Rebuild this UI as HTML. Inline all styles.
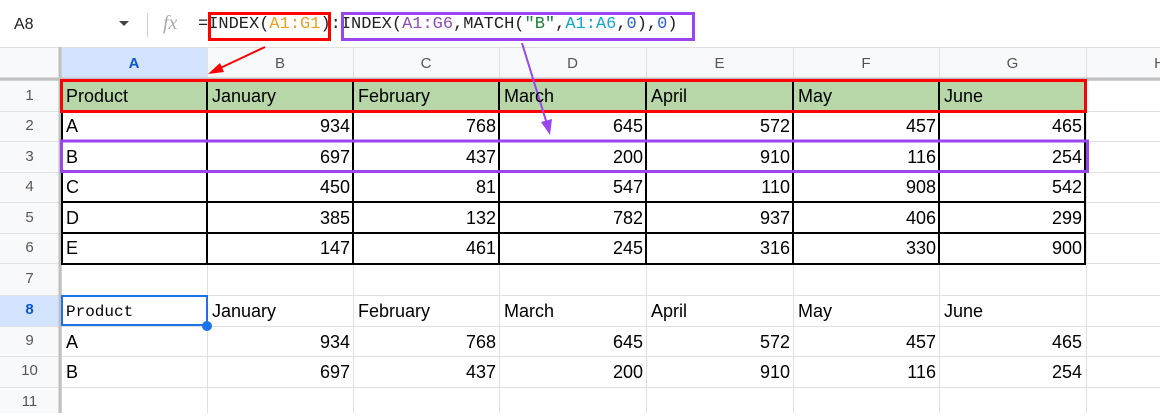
<!DOCTYPE html><html><head><meta charset="utf-8"><style>
body{margin:0;width:1160px;height:413px;overflow:hidden;background:#fff;font-family:"Liberation Sans",Arial,sans-serif;position:relative}
.c{position:absolute;font-size:18px;color:#000;white-space:nowrap;line-height:30px;height:30px}
.r{text-align:right}
.h{position:absolute;font-size:15px;color:#555;text-align:center;line-height:30px}
.m{font-family:"Liberation Mono",monospace}
</style></head><body>
<div style="position:absolute;left:0;top:0;width:1160px;height:47px;background:#fff"></div>
<div style="position:absolute;left:14px;top:10px;font-size:16px;line-height:30px;color:#222">A8</div>
<div style="position:absolute;left:119px;top:21px;width:0;height:0;border-left:5px solid transparent;border-right:5px solid transparent;border-top:5px solid #444"></div>
<div style="position:absolute;left:147px;top:13px;width:1px;height:24px;background:#ccc"></div>
<div style="position:absolute;left:163px;top:8px;font-family:'Liberation Serif',serif;font-style:italic;font-size:20px;line-height:30px;color:#aaa">fx</div>
<div class="m" style="position:absolute;left:198px;top:10px;font-size:17px;line-height:30px;color:#222;white-space:pre">=INDEX(<span style="color:#f0a020">A1:G1</span>):INDEX(<span style="color:#8a4fb0">A1:G6</span>,MATCH(<span style="color:#188038">"B"</span>,<span style="color:#12a5d0">A1:A6</span>,<span style="color:#3060d0">0</span>),<span style="color:#3060d0">0</span>)</div>
<svg style="position:absolute;left:0;top:0" width="1160" height="413">
<rect x="0" y="47" width="1160" height="33" fill="#f8f9fa"/>
<rect x="0" y="47" width="61" height="366" fill="#f8f9fa"/>
<rect x="61" y="47" width="146" height="33" fill="#d3e3fd"/>
<rect x="0" y="295" width="61" height="31" fill="#d3e3fd"/>
<rect x="61" y="80" width="1025" height="31" fill="#b7d7a8"/>
<g stroke="#e0e0e0" stroke-width="1">
<line x1="0" y1="47.5" x2="1160" y2="47.5"/>
<line x1="0" y1="80.5" x2="1160" y2="80.5"/><line x1="0" y1="111.5" x2="1160" y2="111.5"/><line x1="0" y1="141.5" x2="1160" y2="141.5"/><line x1="0" y1="172.5" x2="1160" y2="172.5"/><line x1="0" y1="202.5" x2="1160" y2="202.5"/><line x1="0" y1="233.5" x2="1160" y2="233.5"/><line x1="0" y1="263.5" x2="1160" y2="263.5"/><line x1="0" y1="295.5" x2="1160" y2="295.5"/><line x1="0" y1="326.5" x2="1160" y2="326.5"/><line x1="0" y1="356.5" x2="1160" y2="356.5"/><line x1="0" y1="387.5" x2="1160" y2="387.5"/>
<line x1="61.5" y1="47" x2="61.5" y2="413"/><line x1="207.5" y1="47" x2="207.5" y2="413"/><line x1="353.5" y1="47" x2="353.5" y2="413"/><line x1="499.5" y1="47" x2="499.5" y2="413"/><line x1="646.5" y1="47" x2="646.5" y2="413"/><line x1="793.5" y1="47" x2="793.5" y2="413"/><line x1="939.5" y1="47" x2="939.5" y2="413"/><line x1="1086.5" y1="47" x2="1086.5" y2="413"/>
</g>
<line x1="0" y1="79" x2="1160" y2="79" stroke="#c0c0c0" stroke-width="3"/>
<line x1="60" y1="47" x2="60" y2="413" stroke="#c0c0c0" stroke-width="3"/>
<g stroke="#000" stroke-width="2">
<line x1="61" y1="111" x2="1086" y2="111"/><line x1="61" y1="141" x2="1086" y2="141"/><line x1="61" y1="172" x2="1086" y2="172"/><line x1="61" y1="202" x2="1086" y2="202"/><line x1="61" y1="233" x2="1086" y2="233"/><line x1="61" y1="264" x2="1086" y2="264"/>
<line x1="62" y1="80" x2="62" y2="264"/><line x1="207" y1="80" x2="207" y2="264"/><line x1="353" y1="80" x2="353" y2="264"/><line x1="499" y1="80" x2="499" y2="264"/><line x1="646" y1="80" x2="646" y2="264"/><line x1="793" y1="80" x2="793" y2="264"/><line x1="939" y1="80" x2="939" y2="264"/><line x1="1085" y1="80" x2="1085" y2="264"/>
</g>
<rect x="61.5" y="80.5" width="1024" height="31" fill="none" stroke="#f00" stroke-width="3"/>
<rect x="61.5" y="141" width="1026" height="30.5" fill="none" stroke="#9a45f0" stroke-width="3"/>
<rect x="209.5" y="13.5" width="120" height="26" fill="none" stroke="#f00" stroke-width="3"/>
<rect x="342.5" y="13.5" width="351" height="26" fill="none" stroke="#9a45f0" stroke-width="3"/>
<line x1="265" y1="47" x2="216" y2="70" stroke="#f00" stroke-width="2"/>
<polygon points="208,74 220,63 224,72" fill="#f00"/>
<line x1="522" y1="43" x2="547" y2="124" stroke="#9a45f0" stroke-width="2"/>
<polygon points="550,135 541,122 552,119" fill="#9a45f0"/>
<rect x="62" y="296" width="145" height="29" fill="none" stroke="#1a73e8" stroke-width="2"/>
<circle cx="207" cy="326" r="5" fill="#1a73e8"/>
</svg>
<div class="h" style="left:61px;top:47px;width:146px;color:#0b57d0;font-weight:bold;line-height:33px">A</div>
<div class="h" style="left:207px;top:47px;width:146px;line-height:33px">B</div>
<div class="h" style="left:353px;top:47px;width:146px;line-height:33px">C</div>
<div class="h" style="left:499px;top:47px;width:147px;line-height:33px">D</div>
<div class="h" style="left:646px;top:47px;width:147px;line-height:33px">E</div>
<div class="h" style="left:793px;top:47px;width:146px;line-height:33px">F</div>
<div class="h" style="left:939px;top:47px;width:147px;line-height:33px">G</div>
<div class="h" style="left:1086px;top:47px;width:147px;line-height:33px">H</div>
<div class="h" style="left:0;top:81px;width:59px">1</div>
<div class="h" style="left:0;top:111px;width:59px">2</div>
<div class="h" style="left:0;top:142px;width:59px">3</div>
<div class="h" style="left:0;top:172px;width:59px">4</div>
<div class="h" style="left:0;top:203px;width:59px">5</div>
<div class="h" style="left:0;top:233px;width:59px">6</div>
<div class="h" style="left:0;top:264px;width:59px">7</div>
<div class="h" style="left:0;top:295px;width:59px;color:#0b57d0;font-weight:bold">8</div>
<div class="h" style="left:0;top:326px;width:59px">9</div>
<div class="h" style="left:0;top:356px;width:59px">10</div>
<div class="h" style="left:0;top:387px;width:59px">11</div>

<div class="c" style="left:66px;top:81px">Product</div><div class="c" style="left:212px;top:81px">January</div><div class="c" style="left:358px;top:81px">February</div><div class="c" style="left:504px;top:81px">March</div><div class="c" style="left:651px;top:81px">April</div><div class="c" style="left:798px;top:81px">May</div><div class="c" style="left:944px;top:81px">June</div>

<div class="c" style="left:66px;top:111px">A</div><div class="c r" style="left:207px;width:143px;top:111px">934</div><div class="c r" style="left:353px;width:143px;top:111px">768</div><div class="c r" style="left:499px;width:144px;top:111px">645</div><div class="c r" style="left:646px;width:144px;top:111px">572</div><div class="c r" style="left:793px;width:143px;top:111px">457</div><div class="c r" style="left:939px;width:143px;top:111px">465</div>
<div class="c" style="left:66px;top:142px">B</div><div class="c r" style="left:207px;width:143px;top:142px">697</div><div class="c r" style="left:353px;width:143px;top:142px">437</div><div class="c r" style="left:499px;width:144px;top:142px">200</div><div class="c r" style="left:646px;width:144px;top:142px">910</div><div class="c r" style="left:793px;width:143px;top:142px">116</div><div class="c r" style="left:939px;width:143px;top:142px">254</div>
<div class="c" style="left:66px;top:172px">C</div><div class="c r" style="left:207px;width:143px;top:172px">450</div><div class="c r" style="left:353px;width:143px;top:172px">81</div><div class="c r" style="left:499px;width:144px;top:172px">547</div><div class="c r" style="left:646px;width:144px;top:172px">110</div><div class="c r" style="left:793px;width:143px;top:172px">908</div><div class="c r" style="left:939px;width:143px;top:172px">542</div>
<div class="c" style="left:66px;top:203px">D</div><div class="c r" style="left:207px;width:143px;top:203px">385</div><div class="c r" style="left:353px;width:143px;top:203px">132</div><div class="c r" style="left:499px;width:144px;top:203px">782</div><div class="c r" style="left:646px;width:144px;top:203px">937</div><div class="c r" style="left:793px;width:143px;top:203px">406</div><div class="c r" style="left:939px;width:143px;top:203px">299</div>
<div class="c" style="left:66px;top:233px">E</div><div class="c r" style="left:207px;width:143px;top:233px">147</div><div class="c r" style="left:353px;width:143px;top:233px">461</div><div class="c r" style="left:499px;width:144px;top:233px">245</div><div class="c r" style="left:646px;width:144px;top:233px">316</div><div class="c r" style="left:793px;width:143px;top:233px">330</div><div class="c r" style="left:939px;width:143px;top:233px">900</div>

<div class="c m" style="left:66px;top:297px;font-size:16px">Product</div><div class="c" style="left:212px;top:296px">January</div><div class="c" style="left:358px;top:296px">February</div><div class="c" style="left:504px;top:296px">March</div><div class="c" style="left:651px;top:296px">April</div><div class="c" style="left:798px;top:296px">May</div><div class="c" style="left:944px;top:296px">June</div>
<div class="c" style="left:66px;top:327px">A</div><div class="c r" style="left:207px;width:143px;top:327px">934</div><div class="c r" style="left:353px;width:143px;top:327px">768</div><div class="c r" style="left:499px;width:144px;top:327px">645</div><div class="c r" style="left:646px;width:144px;top:327px">572</div><div class="c r" style="left:793px;width:143px;top:327px">457</div><div class="c r" style="left:939px;width:143px;top:327px">465</div>
<div class="c" style="left:66px;top:357px">B</div><div class="c r" style="left:207px;width:143px;top:357px">697</div><div class="c r" style="left:353px;width:143px;top:357px">437</div><div class="c r" style="left:499px;width:144px;top:357px">200</div><div class="c r" style="left:646px;width:144px;top:357px">910</div><div class="c r" style="left:793px;width:143px;top:357px">116</div><div class="c r" style="left:939px;width:143px;top:357px">254</div>
</body></html>
